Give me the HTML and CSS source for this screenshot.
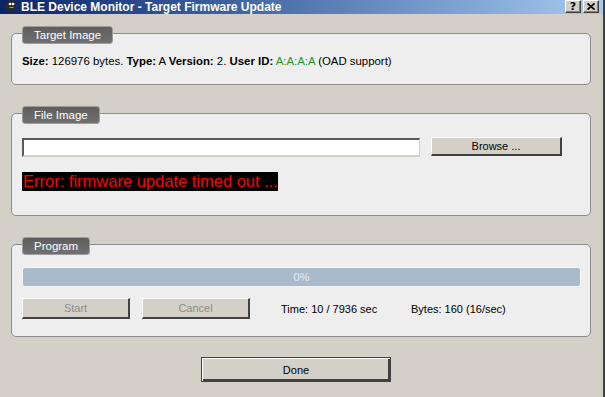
FILE: index.html
```html
<!DOCTYPE html>
<html>
<head>
<meta charset="utf-8">
<link rel="stylesheet" href="styles.css">
</head>
<body>
<div class="window">
  <div class="titlebar">
    <svg class="appicon" width="16" height="14" viewBox="0 0 16 14">
      <path d="M2 4 L5 2 L7 0 L10 0 L11 2 L14 3 L12 6 L14 9 L11 10 L12 13 L9 11 L7 13 L6 10 L3 11 L4 8 L1 7 Z" fill="#2a2a2a"/>
      <circle cx="7" cy="4" r="1.3" fill="#ffffff"/>
      <circle cx="10" cy="4" r="1.3" fill="#ffffff"/>
      <path d="M6 7 L11 7 L10 8 L7 8 Z" fill="#9a9a9a"/>
    </svg>
    <span class="title">BLE Device Monitor - Target Firmware Update</span>
    <div class="tbuttons">
      <div class="tbtn"><span class="q">?</span></div>
      <div class="tbtn"><svg width="8" height="7" viewBox="0 0 8 7"><path d="M0.5 0.5 L7.5 6.5 M7.5 0.5 L0.5 6.5" stroke="#000" stroke-width="1.8"/></svg></div>
    </div>
  </div>

  <div class="content">
    <div class="group g1">
      <div class="tab">Target Image</div>
      <div class="box box1">
        <div class="info"><b>Size:</b> 126976 bytes. <b>Type:</b> A <b>Version:</b> 2. <b>User ID:</b> <span class="green">A:A:A:A</span> (OAD support)</div>
      </div>
    </div>

    <div class="group g2">
      <div class="tab">File Image</div>
      <div class="box box2">
        <div class="filerow">
          <div class="input"></div>
          <div class="btn browse">Browse ...</div>
        </div>
        <div class="error">Error: firmware update timed out ...</div>
      </div>
    </div>

    <div class="group g3">
      <div class="tab">Program</div>
      <div class="box box3">
        <div class="progress">0%</div>
        <div class="progrow">
          <div class="btn disabled">Start</div>
          <div class="btn disabled">Cancel</div>
          <span class="stat time">Time: 10 / 7936 sec</span>
          <span class="stat">Bytes: 160 (16/sec)</span>
        </div>
      </div>
    </div>

    <div class="donerow">
      <div class="btn done">Done</div>
    </div>
  </div>
</div>
</body>
</html>
```

FILE: styles.css
```css
* { box-sizing: border-box; }
html, body { margin: 0; padding: 0; }
body {
  width: 605px;
  height: 397px;
  overflow: hidden;
  background: #d4d0c8;
  font-family: "Liberation Sans", Arial, sans-serif;
  font-size: 11px;
  color: #000;
}
.window {
  width: 605px;
  height: 397px;
  border-right: 2px solid #404040;
  display: flex;
  flex-direction: column;
}
.titlebar {
  height: 14px;
  display: flex;
  align-items: center;
  background: linear-gradient(to right, #0a246a 0%, #3a5e9c 35%, #a6caf0 100%);
  color: #fff;
  padding-left: 3px;
}
.appicon { flex: none; }
.title {
  font-weight: bold;
  font-size: 12px;
  margin-left: 2px;
  line-height: 14px;
  white-space: nowrap;
}
.tbuttons {
  margin-left: auto;
  display: flex;
  gap: 2px;
  margin-right: 4px;
  align-self: flex-start;
}
.tbtn {
  width: 16px;
  height: 13px;
  background: #d4d0c8;
  border-top: 1px solid #fff;
  border-left: 1px solid #fff;
  border-right: 1px solid #404040;
  border-bottom: 1px solid #404040;
  box-shadow: inset -1px -1px 0 #808080;
  display: flex;
  align-items: center;
  justify-content: center;
}
.q {
  color: #000;
  font-weight: bold;
  font-size: 11px;
  line-height: 11px;
  font-family: "DejaVu Sans", sans-serif;
}
.content {
  display: flex;
  flex-direction: column;
  padding: 12px 0 0 11px;
}
.group {
  display: flex;
  flex-direction: column;
  width: 580px;
}
.g2, .g3 { margin-top: 21px; }
.tab {
  align-self: flex-start;
  margin-left: 11px;
  height: 18px;
  padding: 0 11px;
  background: linear-gradient(to bottom, #5e5e5e, #707070);
  border: 1px solid #9c9c9c;
  border-radius: 3px;
  color: #fff;
  font-size: 11.5px;
  line-height: 16px;
  position: relative;
  z-index: 1;
}
.box {
  margin-top: -11px;
  background: #eeeeee;
  border: 1px solid #8c8c8c;
  border-radius: 5px;
  padding-left: 10px;
  padding-right: 9px;
}
.box1 { height: 52px; padding-top: 21px; }
.box2 { height: 103px; padding-top: 23px; display: flex; flex-direction: column; }
.box3 { height: 93px; padding-top: 22px; }
.info { line-height: 13px; white-space: nowrap; font-size: 11.4px; }
.green { color: #1f9a1f; }
.filerow { display: flex; align-items: flex-start; }
.input {
  width: 398px;
  height: 19px;
  margin-top: 1px;
  background: #fff;
  border-top: 2px solid #5a5a5a;
  border-left: 2px solid #5a5a5a;
  border-right: 1px solid #d4d0c8;
  border-bottom: 2px solid #d4d0c8;
}
.btn {
  background: #d4d0c8;
  border-top: 1px solid #fff;
  border-left: 1px solid #fff;
  border-right: 2px solid #404040;
  border-bottom: 2px solid #404040;
  display: flex;
  align-items: center;
  justify-content: center;
  font-size: 11px;
}
.browse {
  margin-left: 11px;
  width: 131px;
  height: 19px;
}
.error {
  align-self: flex-start;
  margin-top: 15px;
  background: #000;
  color: #ff0000;
  font-size: 16.5px;
  height: 19px;
  line-height: 19px;
  padding: 0 0 0 1px;
  width: 256px;
  white-space: nowrap;
  overflow: hidden;
}
.progress {
  height: 20px;
  width: 559px;
  background: #a9bbcb;
  border: 1px solid #f4f6f8;
  border-radius: 3px;
  color: #e4eaf0;
  text-align: center;
  line-height: 18px;
  font-size: 11px;
}
.progrow {
  display: flex;
  align-items: center;
  margin-top: 11px;
  height: 21px;
}
.progrow .btn { width: 108px; height: 21px; }
.progrow .btn + .btn { margin-left: 12px; }
.disabled { color: #8c8c8c; }
.stat { white-space: nowrap; }
.time { margin-left: 31px; width: 130px; }
.donerow {
  display: flex;
  margin-top: 20px;
  padding-left: 190px;
}
.done {
  width: 190px;
  height: 25px;
  border: 1px solid #404040;
  box-shadow: inset 1px 1px 0 #fff, inset -2px -2px 0 #404040;
}
```
